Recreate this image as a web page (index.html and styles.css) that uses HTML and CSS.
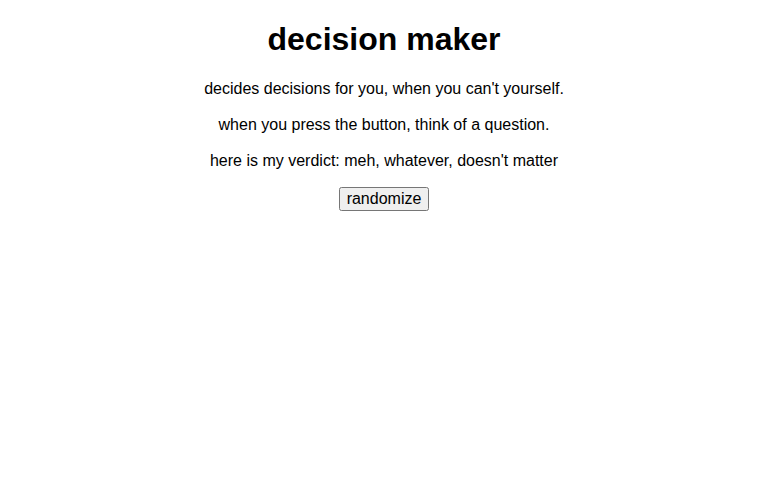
FILE: index.html
```html
<!DOCTYPE html>
<html>
<head>
    <link rel="stylesheet" href="styles.css">
</head>
<body>
    <div class="page">
        <h1>decision maker</h1>
        <p>decides decisions for you, when you can't yourself.</p>
        <p>when you press the button, think of a question.</p>
        <p id="verdict">here is my verdict: meh, whatever, doesn't matter</p>
        <button>randomize</button>
    </div>
</body>
</html>
```

FILE: styles.css
```css
body {
    margin: 0;
    font-family: "Liberation Sans", Arial, sans-serif;
}
.page {
    text-align: center;
}
h1 {
    margin: 21px 0 21px;
}
p {
    line-height: 20px;
    margin: 16px 0;
}
button {
    font-family: "Liberation Sans", Arial, sans-serif;
    font-size: 16px;
}
```
